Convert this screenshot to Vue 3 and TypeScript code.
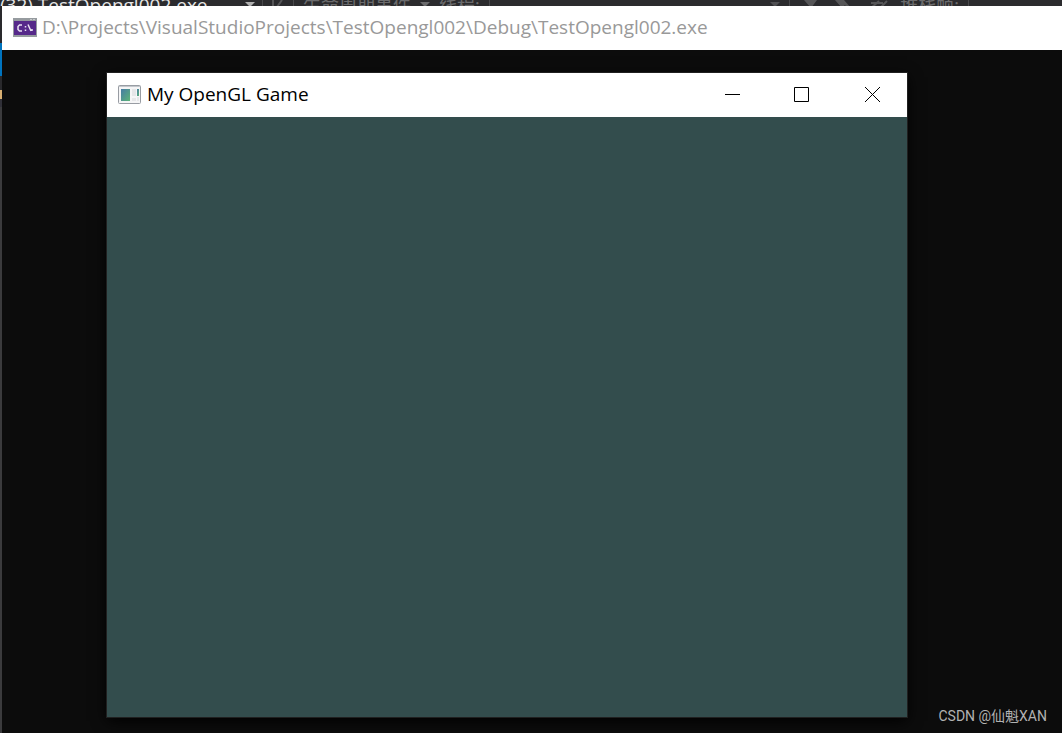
<script setup lang="ts">
const processName: string = '(32) TestOpengl002.exe'
const consoleTitle: string = 'D:\\Projects\\VisualStudioProjects\\TestOpengl002\\Debug\\TestOpengl002.exe'
const gameTitle: string = 'My OpenGL Game'
</script>

<template>
  <div class="desktop">
    <div class="toolbar">
      <div class="group process">
        <span>{{ processName }}</span>
        <i class="caret light"></i>
      </div>
      <div class="group events">
        <span class="sep"></span>
        <svg width="12" height="20" viewBox="0 0 12 20" aria-hidden="true">
          <path d="M1 5v13h10M10 5l-5 7h4" fill="none" stroke="#555557" stroke-width="2" />
        </svg>
        <span class="sep"></span>
        <span>生命周期事件</span>
        <i class="caret"></i>
        <span>线程:</span>
        <span class="sep"></span>
      </div>
      <div class="group frames">
        <i class="caret dim"></i>
        <span class="sep"></span>
        <svg width="92" height="20" viewBox="0 0 92 20" aria-hidden="true">
          <path d="M5 5h13l-6 8zM36 5h9l7 8h-4l-2-3-3 3z" fill="#555557" />
          <path d="M71 14l9-8M80 14l8-8M72 8h12" fill="none" stroke="#555557" stroke-width="2" />
        </svg>
        <span>堆栈帧:</span>
        <span class="sep"></span>
      </div>
    </div>

    <div class="workspace">
      <div class="rail" aria-hidden="true">
        <i class="mark gap"></i><i class="mark blue"></i><i class="mark dark"></i><i class="mark gold"></i><i class="mark slate"></i>
      </div>
      <section class="console">
        <header class="console-bar">
          <svg class="console-icon" width="24" height="19" viewBox="0 0 24 19" aria-hidden="true">
            <path d="M0 0h24v19H0z" fill="#969b9f" />
            <path d="M1 3h22v14H1z" fill="#56298a" />
            <path d="M17 1h2v1h-2zM20 1h2v1h-2z" fill="#c5c9cc" />
            <path d="M9 7H6.500L5 8.500v3L6.500 13H9M12.500 8v1.500M12.500 11.500V13M15 6.500l3 6.500M19 11v2" fill="none" stroke="#e9e2f2" stroke-width="1.500" />
          </svg>
          <span class="title">{{ consoleTitle }}</span>
        </header>
        <div class="console-body">
          <section class="game">
            <header class="game-bar">
              <svg class="game-icon" width="23" height="19" viewBox="0 0 23 19" aria-hidden="true">
                <defs>
                  <linearGradient id="pane" x1="0" y1="0" x2="1" y2="1">
                    <stop offset="0" stop-color="#477ba5" />
                    <stop offset="1" stop-color="#5db477" />
                  </linearGradient>
                </defs>
                <rect x="0.500" y="0.500" width="22" height="18" rx="1" fill="#f5f5f6" stroke="#989ca3" />
                <path d="M1 1h21v1H1z" fill="#c3c7cc" />
                <path d="M3 4h9v12H3z" fill="url(#pane)" />
                <path d="M14 4h4v7h-4zM14 13h4v3h-4zM19 12h2v4h-2z" fill="#e5e6e8" />
                <path d="M19 4h2v7h-2z" fill="url(#pane)" />
              </svg>
              <h1 class="title">{{ gameTitle }}</h1>
              <div class="controls">
                <button type="button" aria-label="Minimize">
                  <svg width="16" height="16" viewBox="0 0 16 16"><path d="M1 7h15v1H1z" /></svg>
                </button>
                <button type="button" aria-label="Maximize">
                  <svg width="16" height="16" viewBox="0 0 16 16"><path d="M0.500 0.500h14v14h-14z" fill="none" stroke="#000" /></svg>
                </button>
                <button type="button" aria-label="Close">
                  <svg width="16" height="16" viewBox="0 0 16 16"><path d="M1 0l15 15M16 0L1 15" fill="none" stroke="#000" /></svg>
                </button>
              </div>
            </header>
            <div class="canvas"></div>
          </section>
          <span class="watermark">CSDN @仙魁XAN</span>
        </div>
      </section>
    </div>
  </div>
</template>

<style>
body {
  margin: 0;
}
</style>

<style scoped>
.desktop {
  display: flex;
  flex-direction: column;
  min-height: 100vh;
  background: #0c0c0c;
  font-family: "Open Sans", "Noto Sans CJK SC", sans-serif;
}
.toolbar {
  display: flex;
  box-sizing: border-box;
  height: 6px;
  padding-top: 3px;
  overflow: hidden;
  background: #2b2b2e;
  color: #6b6b6d;
  font-size: 18px;
  line-height: 20px;
  white-space: nowrap;
}
.group {
  display: flex;
  align-items: center;
}
.process {
  width: 262px;
  flex: none;
  color: #e6e6e6;
  font-size: 19px;
  justify-content: space-between;
  box-sizing: border-box;
  padding-right: 7px;
}
.events {
  gap: 9px;
}
.frames {
  margin-left: auto;
  margin-right: 93px;
  gap: 9px;
}
.sep {
  width: 1px;
  height: 20px;
  background: #48484b;
}
.caret {
  border: 5px solid transparent;
  border-top-color: #6b6b6d;
  border-bottom: 0;
}
.caret.light {
  border-top-color: #b0b0b0;
}
.caret.dim {
  border-top-color: #505053;
}
.workspace {
  display: flex;
  flex: 1;
}
.rail {
  width: 2px;
  flex: none;
  background: #3b3b3d;
}
.mark {
  display: block;
}
.gap {
  height: 37px;
  background: #29292c;
}
.blue {
  height: 33px;
  background: #0074bf;
}
.dark {
  height: 14px;
  background: #29292c;
}
.gold {
  height: 9px;
  background: #d7ae71;
}
.slate {
  height: 8px;
  background: #303038;
}
.console {
  display: flex;
  flex-direction: column;
  flex: 1;
  min-width: 0;
}
.console-bar {
  display: flex;
  align-items: center;
  gap: 5px;
  box-sizing: border-box;
  height: 44px;
  padding: 0 11px 2px;
  background: #fff;
  color: #999;
}
.title {
  margin: 0;
  font-size: 19px;
  line-height: 24px;
  font-weight: 400;
  white-space: nowrap;
}
.console-body {
  position: relative;
  display: flex;
  flex: 1;
  padding: 23px 155px 16px 105px;
  background: #0c0c0c;
}
.game {
  display: flex;
  flex-direction: column;
  flex: 1;
  box-shadow: 0 0 0 1px #202020, 0 4px 14px #000;
}
.game-bar {
  display: flex;
  align-items: center;
  gap: 6px;
  box-sizing: border-box;
  height: 44px;
  padding: 0 0 2px 11px;
  background: #fff;
  color: #000;
}
.console-icon,
.game-icon {
  flex: none;
}
.controls {
  display: flex;
  margin-left: auto;
}
.controls button {
  display: flex;
  box-sizing: border-box;
  align-items: center;
  justify-content: center;
  width: 70px;
  height: 42px;
  padding: 2px 0 0;
  border: 0;
  background: transparent;
}
.canvas {
  flex: 1;
  background: #334d4d;
}
.watermark {
  position: absolute;
  right: 15px;
  bottom: 7px;
  color: #b2b2b2;
  font-family: Roboto, "Noto Sans CJK SC", sans-serif;
  font-size: 14px;
  line-height: 20px;
}
</style>
